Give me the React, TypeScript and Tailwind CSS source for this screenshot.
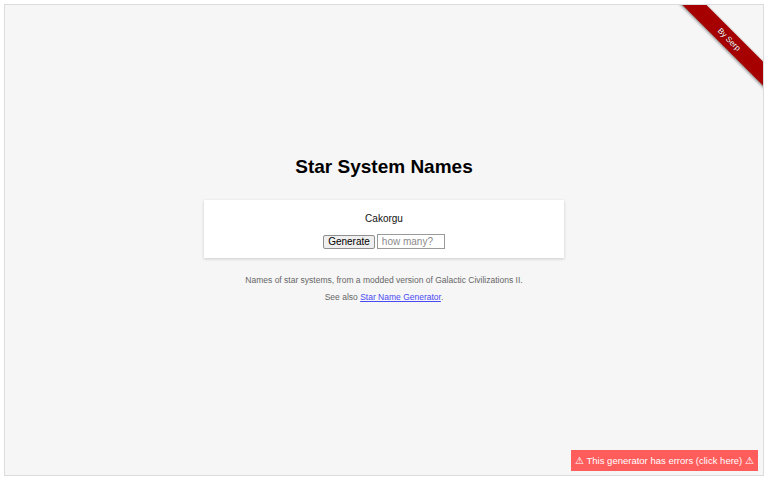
import React from 'react';

export default function App() {
  return (
    <div className="bg-white p-[4px] w-[768px] h-[480px]" style={{ fontFamily: '"Liberation Sans", Arial, sans-serif' }}>
      <div className="relative h-[472px] border border-[#dcdcdc] bg-[#f6f6f6] overflow-hidden">
        {/* Ribbon */}
        <div className="absolute top-[26px] right-[-46px] w-[160px] h-[17px] rotate-45 bg-[#a70000] shadow-[0_1px_3px_rgba(0,0,0,0.5)] flex items-center justify-center">
          <span className="text-[8px] text-white leading-none [text-shadow:0_0_2px_rgba(0,0,0,0.6)]">By Serp</span>
        </div>

        <div className="flex flex-col items-center pt-[150px]">
          <h1 className="text-[19px] leading-[24px] font-bold text-black">Star System Names</h1>

          <div className="mt-[21px] w-[360px] bg-white shadow-[0_1px_3px_rgba(0,0,0,0.18)] flex flex-col items-center pt-[13px] pb-[9px]">
            <div className="text-[10px] leading-[12px] text-[#111]">Cakorgu</div>
            <div className="mt-[9px] flex items-center gap-[2px]">
              <button className="h-[14px] px-[4px] text-[10px] leading-none text-black bg-[#efefef] border border-[#8f8f8f] rounded-[2px]">
                Generate
              </button>
              <input
                placeholder="how many?"
                className="w-[68px] h-[15px] px-[4px] text-[10px] leading-none border border-[#9a9a9a] bg-white placeholder:text-[#8a8a8a] outline-none"
              />
            </div>
          </div>

          <p className="mt-[17px] text-[8.5px] leading-[10px] text-[#666]">
            Names of star systems, from a modded version of Galactic Civilizations II.
          </p>
          <p className="mt-[7px] text-[8.5px] leading-[10px] text-[#666]">
            See also <a href="#" className="text-[#4a4af5] underline">Star Name Generator</a>.
          </p>
        </div>

        <button className="absolute right-[5px] bottom-[4px] w-[187px] h-[21px] bg-[#ff5c5c] text-white text-[9.5px] leading-none whitespace-nowrap flex items-center justify-center">
          ⚠ This generator has errors (click here) ⚠
        </button>
      </div>
    </div>
  );
}
